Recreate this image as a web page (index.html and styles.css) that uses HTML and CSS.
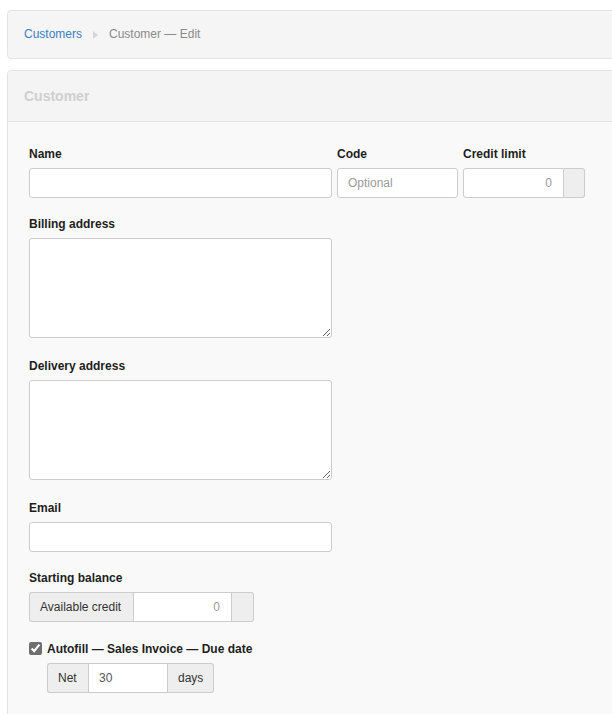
FILE: index.html
```html
<!DOCTYPE html>
<html lang="en">
<head>
<meta charset="utf-8">
<title>Customer — Edit</title>
<link rel="stylesheet" href="styles.css">
</head>
<body>
<nav class="breadcrumb">
  <a class="crumb-link" href="#">Customers</a>
  <svg class="crumb-sep" width="5" height="8" viewBox="0 0 5 8"><path d="M0 0 L5 4 L0 8 Z" fill="#d6d6d6"/></svg>
  <span class="crumb-current">Customer — Edit</span>
</nav>

<section class="panel">
  <header class="panel-header">Customer</header>
  <div class="panel-body">
    <div class="row">
      <div class="field col-name">
        <label class="label">Name</label>
        <input class="input" type="text">
      </div>
      <div class="field col-code">
        <label class="label">Code</label>
        <input class="input" type="text" placeholder="Optional">
      </div>
      <div class="field col-credit">
        <label class="label">Credit limit</label>
        <div class="group">
          <input class="input group-input num credit-input" type="text" placeholder="0">
          <span class="addon addon-blank addon-last"></span>
        </div>
      </div>
    </div>

    <div class="field field-area">
      <label class="label">Billing address</label>
      <textarea class="textarea"></textarea>
    </div>

    <div class="field field-area">
      <label class="label">Delivery address</label>
      <textarea class="textarea"></textarea>
    </div>

    <div class="field">
      <label class="label">Email</label>
      <input class="input wide" type="text">
    </div>

    <div class="field">
      <label class="label">Starting balance</label>
      <div class="group">
        <span class="addon addon-first credit-addon">Available credit</span>
        <input class="input group-input num balance-input" type="text" placeholder="0">
        <span class="addon addon-blank addon-last balance-addon"></span>
      </div>
    </div>

    <div class="check-row">
      <input class="checkbox" type="checkbox" checked>
      <span class="check-label">Autofill — Sales Invoice — Due date</span>
    </div>
    <div class="group due-group">
      <span class="addon addon-first net-addon">Net</span>
      <input class="input group-input due-input" type="text" value="30">
      <span class="addon addon-last days-addon">days</span>
    </div>
  </div>
</section>
</body>
</html>
```

FILE: styles.css
```css
html {
  overflow: hidden;
  background: #fff;
}

body {
  margin: 10px -30px 0 7px;
  font-family: "Liberation Sans", Arial, sans-serif;
  font-size: 12px;
  color: #222;
}

.breadcrumb {
  display: flex;
  align-items: center;
  background: #f5f5f5;
  border: 1px solid #e3e3e3;
  border-radius: 4px;
  padding: 16px 16px;
  line-height: 15px;
  margin-bottom: 11px;
}

.crumb-link {
  color: #3a7fc4;
  text-decoration: none;
}

.crumb-sep {
  margin: 0 11px;
  display: block;
}

.crumb-current {
  color: #8a8a8a;
}

.panel {
  border: 1px solid #e3e3e3;
  border-radius: 4px 4px 0 0;
  background: #f9f9f9;
  height: 660px;
}

.panel-header {
  background: #f4f4f4;
  border-bottom: 1px solid #e3e3e3;
  border-radius: 4px 4px 0 0;
  height: 50px;
  line-height: 50px;
  padding: 0 16px;
  font-size: 14px;
  font-weight: bold;
  color: #cfcfcf;
}

.panel-body {
  padding: 24px 21px 0;
}

.row {
  display: flex;
  gap: 5px;
}

.col-name { width: 303px; }
.col-code { width: 121px; }
.col-credit { width: 122px; }

.field {
  margin-bottom: 18px;
}

.field-area {
  margin-bottom: 20px;
}

.label {
  display: block;
  font-weight: bold;
  font-size: 12px;
  line-height: 16px;
  margin-bottom: 6px;
  color: #1e1e1e;
}

.input {
  display: block;
  box-sizing: border-box;
  width: 100%;
  height: 30px;
  margin: 0;
  padding: 0 10px;
  border: 1px solid #ccc;
  border-radius: 3px;
  background: #fff;
  font-family: "Liberation Sans", Arial, sans-serif;
  font-size: 12px;
  color: #555;
  outline: none;
}

.input::placeholder {
  color: #9a9a9a;
}

.wide {
  width: 303px;
}

.textarea {
  display: block;
  box-sizing: border-box;
  width: 303px;
  height: 100px;
  margin: 0;
  padding: 6px 10px;
  border: 1px solid #ccc;
  border-radius: 3px;
  background: #fff;
  font-family: "Liberation Sans", Arial, sans-serif;
  font-size: 12px;
  resize: both;
  outline: none;
}

.group {
  display: flex;
  height: 30px;
}

.group-input {
  border-radius: 0;
}

.num {
  text-align: right;
  padding-right: 11px;
}

.addon {
  box-sizing: border-box;
  height: 30px;
  display: flex;
  align-items: center;
  flex: none;
  padding: 0 10px;
  background: #eee;
  border: 1px solid #ccc;
  color: #333;
  font-size: 12px;
  white-space: nowrap;
}

.addon-first {
  border-radius: 3px 0 0 3px;
  border-right: 0;
}

.addon-last {
  border-radius: 0 3px 3px 0;
  border-left: 0;
}

.addon-blank {
  width: 21px;
  padding: 0;
}

.credit-addon {
  width: 104px;
}

.net-addon {
  width: 41px;
}

.days-addon {
  width: 46px;
}

.credit-input {
  width: 101px;
  flex: none;
  border-radius: 3px 0 0 3px;
}

.balance-input {
  width: 99px;
  flex: none;
}

.balance-addon {
  width: 22px;
}

.due-input {
  width: 80px;
  flex: none;
  padding-left: 10px;
}

.check-row {
  display: flex;
  align-items: center;
  height: 17px;
}

.checkbox {
  width: 13px;
  height: 13px;
  margin: 0 5px 0 0;
  accent-color: #6f6f6f;
}

.check-label {
  font-weight: bold;
  font-size: 12px;
  color: #1e1e1e;
}

.due-group {
  margin-top: 6px;
  margin-left: 18px;
}
```
